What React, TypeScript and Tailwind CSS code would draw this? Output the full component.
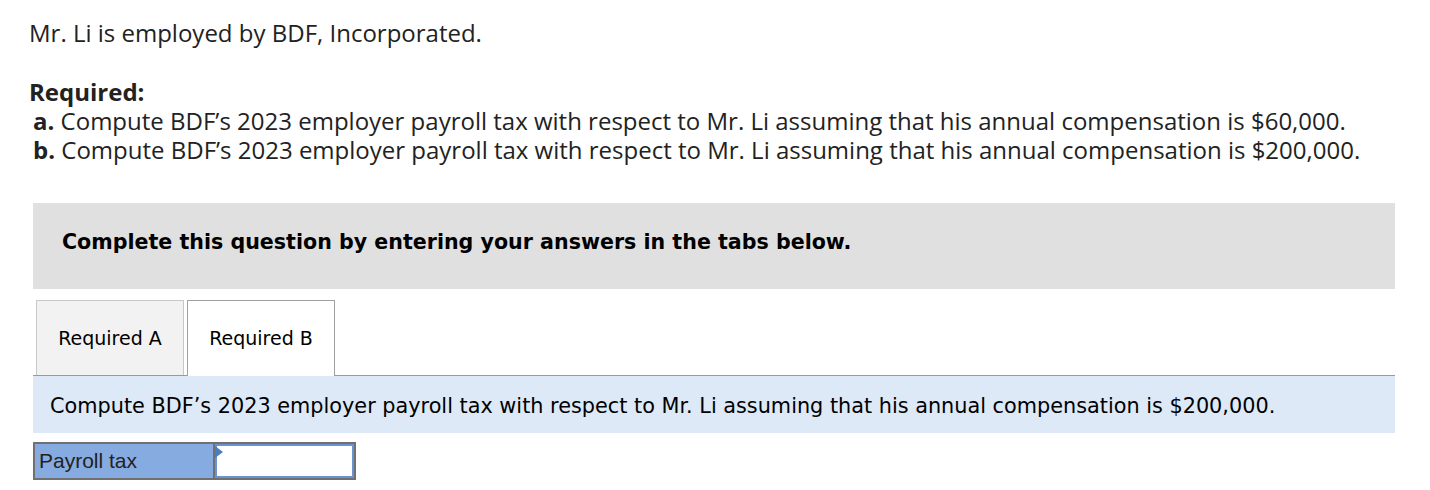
export default function App() {
  return (
    <div className="w-[1430px] h-[490px] overflow-hidden bg-white text-[#222]">
      {/* question text */}
      <div className="pl-[29px] pt-[18px] font-['Open_Sans',sans-serif] text-[24px] leading-[29px]">
        <p>Mr. Li is employed by BDF, Incorporated.</p>
        <p className="mt-[30px] font-bold">Required:</p>
        <p className="pl-[4px]">
          <b>a.</b> Compute BDF’s 2023 employer payroll tax with respect to Mr. Li assuming that his annual compensation is $60,000.
        </p>
        <p className="pl-[4px]">
          <b>b.</b> Compute BDF’s 2023 employer payroll tax with respect to Mr. Li assuming that his annual compensation is $200,000.
        </p>
      </div>

      <div className="ml-[33px] mt-[39px] w-[1362px] [font-family:'DejaVu_Sans',Verdana,sans-serif] text-black">
        {/* instructions */}
        <div className="h-[86px] bg-[#e0e0e0] flex items-center pl-[29px] pb-[8px]">
          <span className="font-bold text-[20.6px]">Complete this question by entering your answers in the tabs below.</span>
        </div>

        {/* tabs */}
        <div className="mt-[11px] flex items-end border-b border-[#9a9a9a] pl-[3px] gap-[3px]">
          <div className="w-[148px] h-[75px] bg-[#f2f2f2] border border-b-0 border-[#c8c8c8] flex items-center justify-center text-[19px]">
            Required A
          </div>
          <div className="w-[148px] h-[76px] -mb-px bg-white border border-b-0 border-[#a0a0a0] flex items-center justify-center text-[19px]">
            Required B
          </div>
        </div>

        {/* prompt */}
        <div className="h-[57px] bg-[#dde9f7] flex items-center pl-[17px] pt-[4px] text-[20.8px]">
          Compute BDF’s 2023 employer payroll tax with respect to Mr. Li assuming that his annual compensation is $200,000.
        </div>

        {/* answer row */}
        <div className="mt-[9px] flex w-[323px] h-[38px] border-2 border-[#707070]">
          <div className="w-[180px] bg-[#86abe0] border-r-2 border-[#707070] flex items-center pl-[4px] font-['Liberation_Sans',Arial,sans-serif] text-[21px] text-[#222]">
            Payroll tax
          </div>
          <div className="relative flex-1 bg-white border-2 border-[#6b93d0]">
            <div className="absolute -left-[2px] top-0 w-0 h-0 border-t-[6px] border-b-[6px] border-l-[8px] border-t-transparent border-b-transparent border-l-[#4a7cc4]" />
          </div>
        </div>
      </div>
    </div>
  );
}
